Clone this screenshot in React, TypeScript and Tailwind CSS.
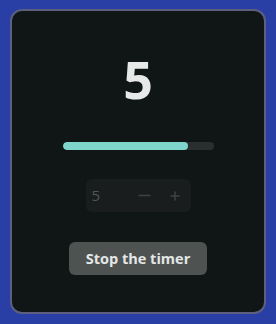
import React from 'react';

const App: React.FC = () => {
  const progress = 83;
  return (
    <div className="w-[276px] h-[324px] bg-[#2a3fa6] pt-[9px] pl-[10px] font-['Open_Sans',sans-serif]">
      <div className="w-[256px] h-[305px] rounded-xl border-2 border-[#5c5f7e] bg-[#101515] flex flex-col items-center">
        <div className="mt-[42px] text-[52px] leading-none font-bold text-[#e6e9e8]">5</div>

        <div className="mt-[37px] w-[151px] h-[8px] rounded-full bg-[#2a2e2e] overflow-hidden">
          <div className="h-full rounded-full bg-[#7dd5cb]" style={{ width: `${progress}%` }} />
        </div>

        <div className="mt-[29px] w-[105px] h-[33px] rounded-md bg-[#191d1d] flex items-center text-[15px] text-[#525757]">
          <div className="w-[44px] pl-[6px]">5</div>
          <div className="w-[30px] flex justify-center">
            <svg width="13" height="13" viewBox="0 0 13 13">
              <line x1="0.5" y1="6.5" x2="12.5" y2="6.5" stroke="#3c4141" strokeWidth="1.6" />
            </svg>
          </div>
          <div className="w-[31px] flex justify-center">
            <svg width="10" height="10" viewBox="0 0 10 10">
              <line x1="0.5" y1="5" x2="9.5" y2="5" stroke="#3c4141" strokeWidth="1.6" />
              <line x1="5" y1="0.5" x2="5" y2="9.5" stroke="#3c4141" strokeWidth="1.6" />
            </svg>
          </div>
        </div>

        <button className="mt-[30px] w-[138px] h-[33px] rounded-md bg-[#4e5352] text-[14.5px] font-bold text-[#e4e7e6]">
          Stop the timer
        </button>
      </div>
    </div>
  );
};

export default App;
